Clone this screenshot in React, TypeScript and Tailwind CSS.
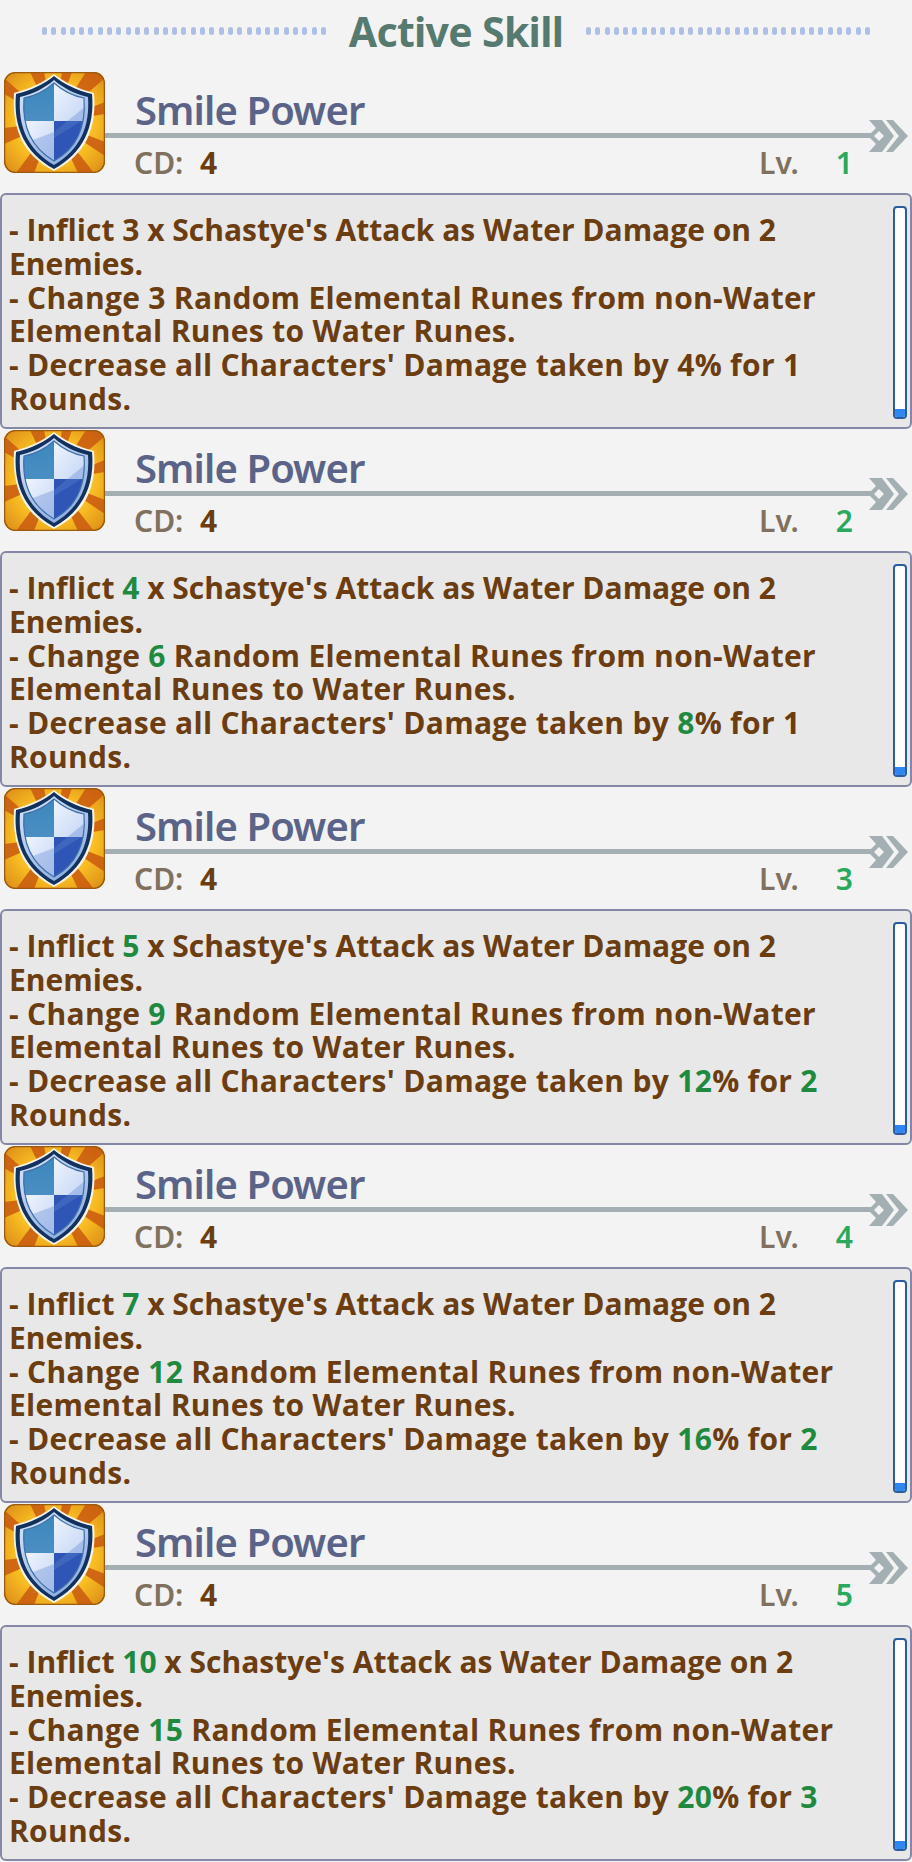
const dots = Array.from({ length: 31 });

const INNER_SHIELD = "M50 11 C59 19 69 24 80 26 C82 52 75 75 50 89 C26 75 18 52 20 26 C31 24 41 19 50 11 Z";

function Shield() {
  return (
    <svg viewBox="0 0 101 101" className="h-[101px] w-[101px] shrink-0" aria-hidden="true">
      <defs>
        <radialGradient id="glow" cx="50%" cy="50%" r="68%">
          <stop offset="0" stopColor="#fff06a" />
          <stop offset="0.6" stopColor="#f8bc22" />
          <stop offset="1" stopColor="#dc8d18" />
        </radialGradient>
        <linearGradient id="paneLight" x1="0" y1="0" x2="1" y2="1">
          <stop offset="0" stopColor="#f2f6ff" />
          <stop offset="1" stopColor="#c3d5f4" />
        </linearGradient>
        <linearGradient id="paneDark" x1="0" y1="0" x2="0" y2="1">
          <stop offset="0" stopColor="#3a87bb" />
          <stop offset="1" stopColor="#4a8ec4" />
        </linearGradient>
        <linearGradient id="rim" x1="0" y1="0" x2="0.6" y2="1">
          <stop offset="0" stopColor="#d8e6fa" />
          <stop offset="1" stopColor="#8fb0e2" />
        </linearGradient>
        <clipPath id="tile">
          <rect x="0" y="0" width="101" height="101" rx="11" />
        </clipPath>
        <clipPath id="inner">
          <path d={INNER_SHIELD} />
        </clipPath>
      </defs>
      <g clipPath="url(#tile)">
        <rect width="101" height="101" fill="url(#glow)" />
        <path
          d="M50 50 L0 6 L0 22 Z M50 50 L0 56 L0 72 Z M50 50 L12 101 L30 101 Z M50 50 L74 101 L90 101 Z M50 50 L101 70 L101 84 Z M50 50 L101 30 L101 42 Z M50 50 L101 6 L101 0 L82 0 Z M50 50 L68 0 L58 0 Z M50 50 L40 0 L26 0 Z"
          fill="#c9590f"
          opacity="0.85"
        />
        <rect x="0.5" y="0.5" width="100" height="100" rx="11" fill="none" stroke="#9a5a10" strokeWidth="1.5" />
      </g>
      <path
        d="M50 2 C60 10 74 17 90 21 C93 56 82 83 50 99 C18 83 8 56 10 21 C26 17 40 10 50 2 Z"
        fill="#f8f4e4"
      />
      <path
        d="M50 4 C60 12 72 18 88 22 C91 55 79 81 50 97 C21 81 9 55 12 22 C28 18 40 12 50 4 Z"
        fill="#12315f"
      />
      <path
        d="M50 8 C59 16 71 22 84 25 C86 54 77 77 50 93 C23 77 14 54 16 25 C29 22 41 16 50 8 Z"
        fill="url(#rim)"
      />
      <g clipPath="url(#inner)">
        <rect x="18" y="8" width="32" height="41" fill="url(#paneDark)" />
        <rect x="50" y="8" width="32" height="41" fill="url(#paneLight)" />
        <rect x="18" y="49" width="32" height="42" fill="url(#paneLight)" />
        <rect x="50" y="49" width="32" height="42" fill="#2f55b6" />
        <path d="M18 72 L50 60 L82 34 L82 46 L50 66 L50 91 L18 91 Z" fill="#5f86d0" opacity="0.35" />
      </g>
      <path d={INNER_SHIELD} fill="none" stroke="#3f6ea8" strokeWidth="1.2" />
    </svg>
  );
}

function Arrow() {
  return (
    <svg
      viewBox="0 0 41 32"
      className="absolute top-[-13px] right-[-38px] h-[32px] w-[41px]"
      aria-hidden="true"
    >
      <path d="M1 0 H14 L26 16 L14 32 H1 L8 24 L0 16 L8 8 Z" fill="#a3afb2" />
      <path d="M6 16 L11 11 L16 16 L11 21 Z" fill="#f3f3f3" />
      <path d="M18 0 H25 L40 16 L25 32 H18 L31 16 Z" fill="#a3afb2" />
    </svg>
  );
}

function DotRow() {
  return (
    <div className="flex w-[284px] justify-between">
      {dots.map((_, i) => (
        <span key={i} className="h-[8px] w-[5px] rounded-full bg-[#aebfe6]" />
      ))}
    </div>
  );
}

const LEVELS = [
  { lv: 1, dmg: "3", runes: "3", pct: "4", rounds: "1" },
  { lv: 2, dmg: "4", runes: "6", pct: "8", rounds: "1" },
  { lv: 3, dmg: "5", runes: "9", pct: "12", rounds: "2" },
  { lv: 4, dmg: "7", runes: "12", pct: "16", rounds: "2" },
  { lv: 5, dmg: "10", runes: "15", pct: "20", rounds: "3" },
];

function Hi({ on, children }: { on: boolean; children: React.ReactNode }) {
  return on ? <span className="text-[#1f8a3f]">{children}</span> : <>{children}</>;
}

function SkillLevel({ lv, dmg, runes, pct, rounds }: (typeof LEVELS)[number]) {
  const first = lv > 1;
  return (
    <section>
      <div className="flex h-[101px] pl-[4px]">
        <Shield />
        <div className="flex min-w-0 flex-1 flex-col">
          <div className="flex h-[61px] items-end pl-[30px] font-['Noto_Sans',sans-serif] text-[40px] leading-[46px] font-semibold tracking-[-0.9px] text-[#5b6488]">
            Smile Power
          </div>
          <div className="relative mr-[41px] h-[5px] bg-[#a3afb2]">
            <Arrow />
          </div>
          <div className="flex h-[35px] items-center pt-[14px] pl-[29px] font-['Noto_Sans',sans-serif] text-[30px] font-semibold">
            <span className="w-[66px] text-[#80705e]">CD:</span>
            <span className="font-bold text-[#6b3d10]">4</span>
            <span className="ml-auto w-[61px] text-[#80705e]">Lv.</span>
            <span className="mr-[59px] w-[33px] text-right text-[#2aa85c]">{lv}</span>
          </div>
        </div>
      </div>
      <div className="mt-[20px] flex h-[236px] rounded-[6px] border-2 border-[#8488a6] bg-[#e8e8e8]">
        <p className="min-w-0 flex-1 pt-[18px] pl-[7px] text-[30px] leading-[33.8px] font-bold text-[#6b3d10]">
          - Inflict <Hi on={first}>{dmg}</Hi> x Schastye's Attack as Water Damage on 2 Enemies.
          <br />
          <span className="tracking-[0.3px]">
            - Change <Hi on={first}>{runes}</Hi> Random Elemental Runes from non-Water Elemental
            Runes to Water Runes.
            <br />- Decrease all Characters' Damage taken by <Hi on={first}>{pct}</Hi>% for{" "}
            <Hi on={lv > 2}>{rounds}</Hi> Rounds.
          </span>
        </p>
        <div className="mt-[11px] mr-[3px] mb-[8px] flex w-[14px] shrink-0 flex-col justify-end overflow-hidden rounded-[4px] border-2 border-[#2a5c9e] bg-white">
          <div className="h-[8px] bg-[#2f86ee]" />
        </div>
      </div>
    </section>
  );
}

export default function App() {
  return (
    <div className="h-[1862px] overflow-hidden bg-[#f3f3f3] font-['Open_Sans',sans-serif]">
      <header className="flex h-[62px] items-center px-[42px]">
        <DotRow />
        <h1 className="flex-1 text-center font-['Noto_Sans',sans-serif] text-[41px] leading-none font-bold tracking-[-0.7px] text-[#567a70]">
          Active Skill
        </h1>
        <DotRow />
      </header>
      <div className="mt-[10px] flex flex-col gap-[1px]">
        {LEVELS.map((level) => (
          <SkillLevel key={level.lv} {...level} />
        ))}
      </div>
    </div>
  );
}
